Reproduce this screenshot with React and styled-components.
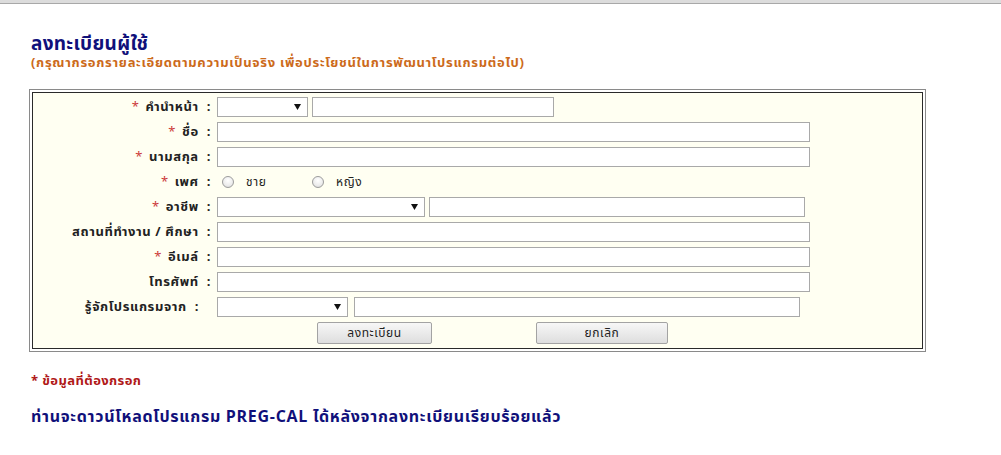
import React from 'react';
import styled, { createGlobalStyle } from 'styled-components';

const GlobalStyle = createGlobalStyle`
    html, body {
        margin: 0;
        padding: 0;
        background: #ffffff;
        font-family: Tahoma, "Noto Sans Thai", "DejaVu Sans", "Noto Sans", sans-serif;
        font-size: 13px;
        color: #222;
    }
`;

const TopBar = styled.div`
    height: 3px;
    background: #dcdcdc;
    border-bottom: 1px solid #a8a8a8;
`;

const Page = styled.div`
    padding: 31px 0 0 31px;
`;

const Title = styled.h2`
    margin: 0;
    font-size: 19px;
    font-weight: bold;
    color: #10107a;
    line-height: 20px;
    letter-spacing: 0.3px;
`;

const Subtitle = styled.div`
    margin-top: 0;
    font-size: 13px;
    line-height: 16px;
    font-weight: bold;
    color: #cc6a1a;
    letter-spacing: 0.7px;
`;

const OuterBox = styled.div`
    margin: 18px 0 0 -2px;
    width: 891px;
    border: 1px solid #8a8a8a;
    padding: 2px;
`;

const InnerBox = styled.div`
    border: 1px solid #2a2a2a;
    background: #fffff2;
    padding: 4px 0 4px 0;
    display: grid;
    grid-template-columns: 180px 1fr;
    column-gap: 4px;
    row-gap: 5px;
`;

const Label = styled.div`
    height: 20px;
    display: flex;
    align-items: center;
    justify-content: flex-end;
    padding-right: 2px;
    font-weight: bold;
    color: #222;
    white-space: pre;
    letter-spacing: 0.6px;
`;

const Star = styled.span`
    color: #cc3a3a;
    margin-right: 6px;
    font-weight: normal;
`;

const Field = styled.div`
    height: 20px;
    display: flex;
    align-items: center;
    gap: 4px;
`;

const TextInput = styled.div`
    box-sizing: border-box;
    width: ${p => p.$w}px;
    height: 20px;
    margin-left: ${p => p.$ml || 0}px;
    background: #fff;
    border: 1px solid #a9a9a9;
`;

const SelectBox = styled.div`
    box-sizing: border-box;
    width: ${p => p.$w}px;
    height: 20px;
    background: #fff;
    border: 1px solid #a9a9a9;
    display: flex;
    align-items: center;
    justify-content: flex-end;
    padding-right: 6px;
`;

const RadioGroup = styled.label`
    display: flex;
    align-items: center;
    width: ${p => p.$w}px;
    font-size: 12px;
    color: #222;
    letter-spacing: 0.6px;
`;

const Radio = styled.span`
    box-sizing: border-box;
    width: 12px;
    height: 12px;
    margin: 0 12px 0 5px;
    border-radius: 50%;
    border: 1px solid #9c9c9c;
    background: radial-gradient(circle at 50% 35%, #ffffff 0%, #ececec 60%, #d4d4d4 100%);
`;

const ButtonRow = styled.div`
    height: 22px;
    display: flex;
    padding-left: 100px;
    gap: 104px;
`;

const Button = styled.button`
    box-sizing: border-box;
    width: ${p => p.$w}px;
    height: 22px;
    padding: 0;
    font-family: inherit;
    font-size: 12px;
    color: #222;
    border: 1px solid #a3a3a3;
    border-radius: 2px;
    background: linear-gradient(#f7f7f7, #dedede);
    letter-spacing: 0.6px;
`;

const Note = styled.div`
    margin-top: 19px;
    font-weight: bold;
    font-size: 13px;
    color: #b01818;
    letter-spacing: 0.4px;
`;

const Notice = styled.div`
    margin-top: 14px;
    font-weight: bold;
    font-size: 16px;
    color: #10107a;
    letter-spacing: 0.7px;
`;

const Arrow = () => (
    <svg width="7" height="6" viewBox="0 0 7 6">
        <path d="M0 0 H7 L3.5 6 Z" fill="#111" />
    </svg>
);

const rows = [
    { label: 'ชื่อ', req: true },
    { label: 'นามสกุล', req: true },
];

const rowsAfter = [
    { label: 'สถานที่ทำงาน / ศึกษา', req: false },
    { label: 'อีเมล์', req: true },
    { label: 'โทรศัพท์', req: false },
];

const LabelCell = ({ text, req }) => (
    <Label>
        {req && <Star>*</Star>}
        {text}  :
    </Label>
);

const App = () => {
    return (
        <>
            <GlobalStyle />
            <TopBar />
            <Page>
                <Title>ลงทะเบียนผู้ใช้</Title>
                <Subtitle>(กรุณากรอกรายละเอียดตามความเป็นจริง  เพื่อประโยชน์ในการพัฒนาโปรแกรมต่อไป)</Subtitle>

                <OuterBox>
                    <InnerBox>
                        <LabelCell text="คำนำหน้า" req />
                        <Field>
                            <SelectBox $w={91}><Arrow /></SelectBox>
                            <TextInput $w={242} />
                        </Field>

                        {rows.map(r => (
                            <React.Fragment key={r.label}>
                                <LabelCell text={r.label} req={r.req} />
                                <Field><TextInput $w={593} /></Field>
                            </React.Fragment>
                        ))}

                        <LabelCell text="เพศ" req />
                        <Field>
                            <RadioGroup $w={86}><Radio />ชาย</RadioGroup>
                            <RadioGroup $w={80}><Radio />หญิง</RadioGroup>
                        </Field>

                        <LabelCell text="อาชีพ" req />
                        <Field>
                            <SelectBox $w={208}><Arrow /></SelectBox>
                            <TextInput $w={376} />
                        </Field>

                        {rowsAfter.map(r => (
                            <React.Fragment key={r.label}>
                                <LabelCell text={r.label} req={r.req} />
                                <Field><TextInput $w={593} /></Field>
                            </React.Fragment>
                        ))}

                        <Label>รู้จักโปรแกรมจาก  :   </Label>
                        <Field>
                            <SelectBox $w={131}><Arrow /></SelectBox>
                            <TextInput $w={446} $ml={2} />
                        </Field>

                        <div />
                        <ButtonRow>
                            <Button $w={115}>ลงทะเบียน</Button>
                            <Button $w={132}>ยกเลิก</Button>
                        </ButtonRow>
                    </InnerBox>
                </OuterBox>

                <Note>*  ข้อมูลที่ต้องกรอก</Note>
                <Notice>ท่านจะดาวน์โหลดโปรแกรม  PREG-CAL  ได้หลังจากลงทะเบียนเรียบร้อยแล้ว</Notice>
            </Page>
        </>
    );
};

export default App;
